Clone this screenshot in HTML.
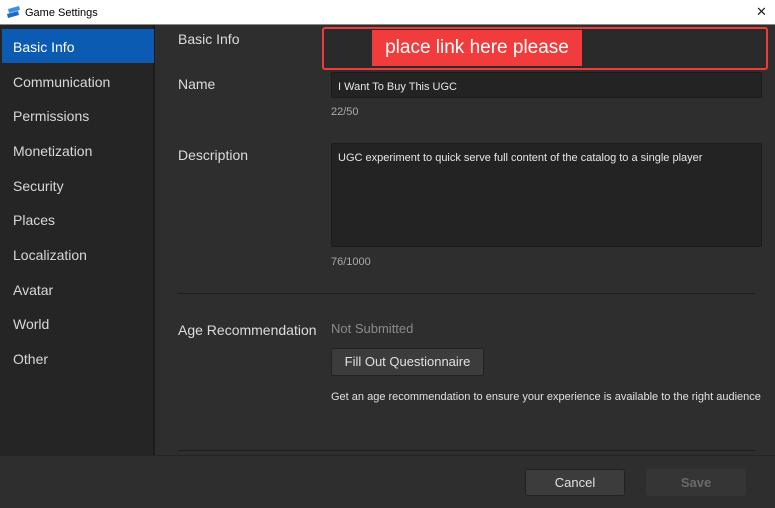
<!DOCTYPE html>
<html><head><style>
*{margin:0;padding:0;box-sizing:border-box}
body{width:775px;height:508px;overflow:hidden;background:#2e2e2e;font-family:"Liberation Sans","DejaVu Sans",sans-serif;color:#e6e6e6;position:relative}
.a{position:absolute}
.title{left:0;top:0;width:775px;height:25px;background:#fff;border-bottom:1px solid #888;color:#000;font-size:11px}
.side{left:0;top:25px;width:155px;height:430px;background:#252525;border-right:2px solid #1c1c1c}
.item{position:absolute;left:13px;font-size:14px;color:#d8d8d8}
.lbl{font-size:14px;color:#dcdcdc}
.small{font-size:11px;color:#aaa}
.inp{background:#232323;border:1px solid #1b1b1b;border-radius:2px;font-size:11px;color:#e6e6e6;padding:8px 6px}
.btn{background:#3c3c3c;border:1px solid #222;border-radius:3px;font-size:13px;text-align:center;color:#e0e0e0}
</style></head><body>
<div class="a title">
 <svg class="a" style="left:7px;top:6px" width="14" height="12" viewBox="0 0 14 12"><path d="M1 3 L12 0 L13 4 L2 7Z" fill="#3a8fe0"/><path d="M0 8 L11 5 L12 9 L1 12Z" fill="#1b6ac4"/></svg>
 <div class="a" style="left:25px;top:7px">Game Settings</div>
 <div class="a" style="left:756px;top:4px;font-size:13px;color:#222">✕</div>
</div>
<div class="a side">
 <div class="a" style="left:2px;top:4px;width:152px;height:34px;background:#0b5bb3"></div>
 <div class="item" style="top:14px;color:#fff">Basic Info</div>
 <div class="item" style="top:49px">Communication</div>
 <div class="item" style="top:83px">Permissions</div>
 <div class="item" style="top:118px">Monetization</div>
 <div class="item" style="top:153px">Security</div>
 <div class="item" style="top:187px">Places</div>
 <div class="item" style="top:222px">Localization</div>
 <div class="item" style="top:257px">Avatar</div>
 <div class="item" style="top:291px">World</div>
 <div class="item" style="top:326px">Other</div>
</div>
<div class="a lbl" style="left:178px;top:31px">Basic Info</div>
<div class="a" style="left:322px;top:27px;width:446px;height:43px;border:2px solid #ef3b3b;border-radius:3px;background:#2a2a2a"></div>
<div class="a" style="left:372px;top:30px;width:210px;height:36px;background:#f03c3c;color:#fff;font-size:19px;line-height:36px;text-align:center">place link here please</div>
<div class="a lbl" style="left:178px;top:76px">Name</div>
<div class="a inp" style="left:331px;top:72px;width:431px;height:26px">I Want To Buy This UGC</div>
<div class="a small" style="left:331px;top:106px">22/50</div>
<div class="a lbl" style="left:178px;top:147px">Description</div>
<div class="a inp" style="left:331px;top:143px;width:431px;height:104px">UGC experiment to quick serve full content of the catalog to a single player</div>
<div class="a small" style="left:331px;top:256px">76/1000</div>
<div class="a" style="left:178px;top:293px;width:577px;height:1px;background:#1d1d1d"></div>
<div class="a lbl" style="left:178px;top:322px">Age Recommendation</div>
<div class="a" style="left:331px;top:321px;font-size:13px;color:#8a8a8a">Not Submitted</div>
<div class="a btn" style="left:331px;top:348px;width:153px;height:28px;line-height:26px">Fill Out Questionnaire</div>
<div class="a" style="left:331px;top:391px;font-size:11px;color:#e0e0e0">Get an age recommendation to ensure your experience is available to the right audience</div>
<div class="a" style="left:178px;top:450px;width:577px;height:1px;background:#1d1d1d"></div>
<div class="a" style="left:0;top:455px;width:775px;height:53px;background:#2e2e2e;border-top:1px solid #242424"></div>
<div class="a btn" style="left:525px;top:469px;width:100px;height:27px;line-height:25px">Cancel</div>
<div class="a btn" style="left:646px;top:469px;width:100px;height:27px;line-height:25px;background:#353535;border-color:#353535;color:#6a6a6a;font-weight:bold">Save</div>
</body></html>
